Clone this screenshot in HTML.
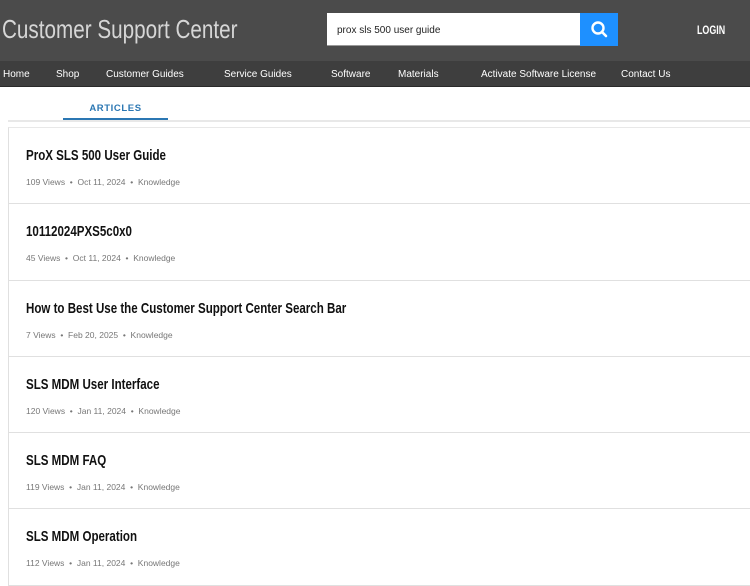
<!DOCTYPE html>
<html><head><style>
body{margin:0;width:750px;height:585px;overflow:hidden;background:#fff;font-family:"Liberation Sans",sans-serif;}
.hd{height:61px;background:#4b4b4b;position:relative;}
.title{position:absolute;left:2px;top:14px;font-size:26px;color:#d6d6d6;transform:scaleX(0.795);transform-origin:0 0;white-space:nowrap;}
.search{position:absolute;left:327px;top:13px;width:253px;height:33px;background:#fff;border-bottom:1px solid #999;box-sizing:border-box;font-size:10px;padding:12px 0 0 10px;color:#222;}
.btn{position:absolute;left:580px;top:13px;width:38px;height:33px;background:#1e90ff;}
.login{position:absolute;left:697px;top:23px;font-weight:bold;font-size:12px;color:#fff;transform:scaleX(0.74);transform-origin:0 0;}
.nav{height:25px;background:#3e3e3e;border-bottom:1px solid #2a2a2a;position:relative;font-size:10px;color:#fff;}
.nav span{position:absolute;top:8px;}
.tab{position:absolute;left:63px;top:100px;width:105px;height:20px;border-bottom:2px solid #2b77b3;color:#2b77b3;font-weight:bold;font-size:9.5px;letter-spacing:0.6px;text-align:center;box-sizing:border-box;padding-top:3px;}
.line{position:absolute;left:8px;top:120px;width:742px;height:2px;background:#e8e8e8;}
.list{position:absolute;left:8px;top:127px;width:742px;border-left:1px solid #e0e0e0;border-top:1px solid #e8e8e8;}
.card{height:75.3px;border-bottom:1px solid #e0e0e0;position:relative;}
.card h3{margin:0;position:absolute;left:17px;top:19px;font-size:15px;color:#111;font-weight:600;transform:scaleX(0.77);transform-origin:0 0;white-space:nowrap;}
.card p{margin:0;position:absolute;left:17px;top:49px;font-size:8.5px;color:#777;}
</style></head><body>
<div class="hd">
<div class="title">Customer Support Center</div>
<div class="search">prox sls 500 user guide</div>
<div class="btn"><svg width="38" height="33"><circle cx="18" cy="15" r="5.5" fill="none" stroke="#fff" stroke-width="2.4"/><line x1="22" y1="19" x2="26" y2="23" stroke="#fff" stroke-width="2.6" stroke-linecap="round"/></svg></div>
<div class="login">LOGIN</div>
</div>
<div class="nav">
<span style="left:3px">Home</span><span style="left:56px">Shop</span><span style="left:106px">Customer Guides</span><span style="left:224px">Service Guides</span><span style="left:331px">Software</span><span style="left:398px">Materials</span><span style="left:481px">Activate Software License</span><span style="left:621px">Contact Us</span>
</div>
<div class="line"></div>
<div class="tab">ARTICLES</div>
<div class="list">
<div class="card"><h3>ProX SLS 500 User Guide</h3><p>109 Views &nbsp;•&nbsp; Oct 11, 2024 &nbsp;•&nbsp; Knowledge</p></div>
<div class="card"><h3>10112024PXS5c0x0</h3><p>45 Views &nbsp;•&nbsp; Oct 11, 2024 &nbsp;•&nbsp; Knowledge</p></div>
<div class="card"><h3>How to Best Use the Customer Support Center Search Bar</h3><p>7 Views &nbsp;•&nbsp; Feb 20, 2025 &nbsp;•&nbsp; Knowledge</p></div>
<div class="card"><h3>SLS MDM User Interface</h3><p>120 Views &nbsp;•&nbsp; Jan 11, 2024 &nbsp;•&nbsp; Knowledge</p></div>
<div class="card"><h3>SLS MDM FAQ</h3><p>119 Views &nbsp;•&nbsp; Jan 11, 2024 &nbsp;•&nbsp; Knowledge</p></div>
<div class="card"><h3>SLS MDM Operation</h3><p>112 Views &nbsp;•&nbsp; Jan 11, 2024 &nbsp;•&nbsp; Knowledge</p></div>
</div>
</body></html>
